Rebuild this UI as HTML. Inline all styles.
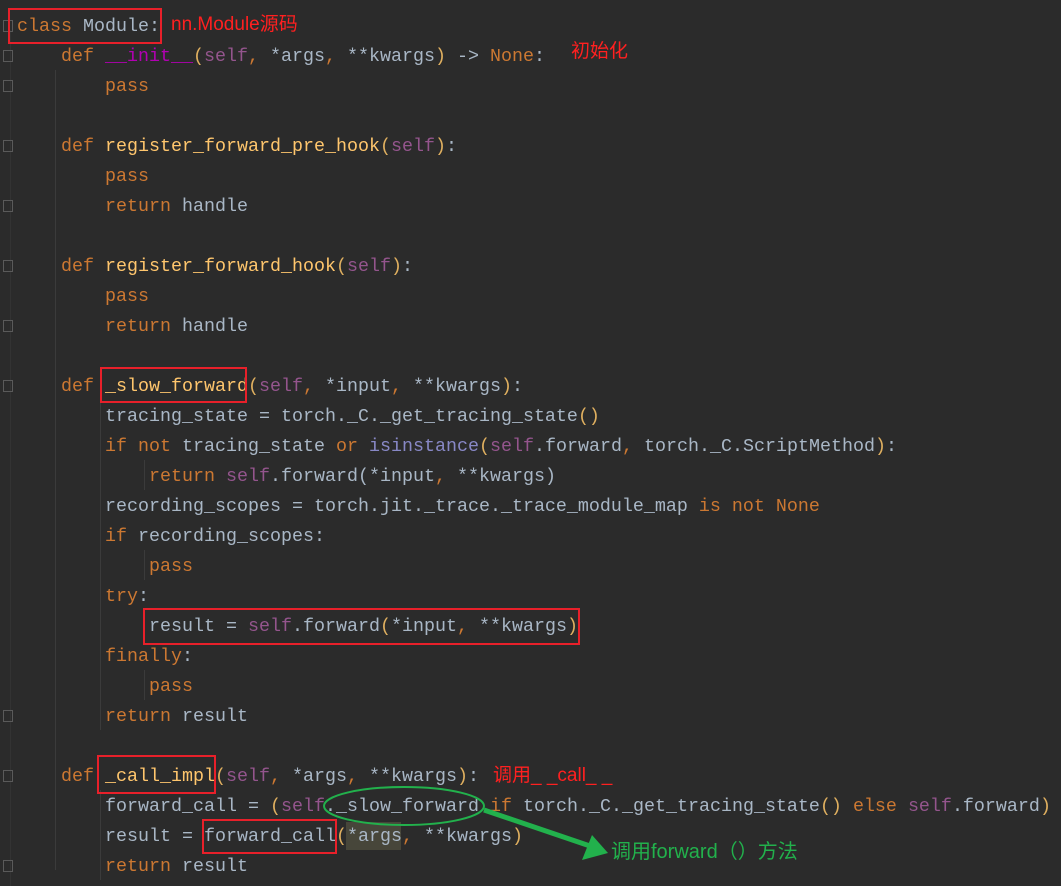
<!DOCTYPE html>
<html><head><meta charset="utf-8"><style>
body{margin:0;width:1061px;height:886px;background:#2b2b2b;overflow:hidden;position:relative;font-family:"Liberation Mono",monospace;}
.l{position:absolute;left:17px;font-size:18.33px;line-height:30px;height:30px;white-space:pre;color:#a9b7c6;margin-top:2px}
.k{color:#cc7832}.f{color:#ffc66d}.s{color:#94558d}.m{color:#b200b2}.p{color:#e0b060}.b{color:#8888c6}
.box{position:absolute;border:2px solid #e8202a;box-sizing:border-box}
.r{position:absolute;color:#ff2020;font-family:"Liberation Sans","Noto Sans CJK SC",sans-serif;font-size:19px;line-height:24px;white-space:pre}
.g{color:#22b14c;font-size:20px}
.vg{position:absolute;width:1px;background:#3b3b3b}
.fold{position:absolute;left:3px;width:10px;height:12px;border:1px solid #5a5a5a;box-sizing:border-box}
</style></head><body>
<div class="vg" style="left:10px;top:30px;height:856px;background:#333"></div>
<div class="vg" style="left:55px;top:70px;height:800px"></div>
<div class="vg" style="left:100px;top:400px;height:330px"></div>
<div class="vg" style="left:100px;top:790px;height:90px"></div>
<div class="vg" style="left:144px;top:460px;height:30px"></div>
<div class="vg" style="left:144px;top:550px;height:30px"></div>
<div class="vg" style="left:144px;top:610px;height:30px"></div>
<div class="vg" style="left:144px;top:670px;height:30px"></div>
<div class="fold" style="top:20px"></div><div class="fold" style="top:50px"></div><div class="fold" style="top:80px"></div>
<div class="fold" style="top:140px"></div><div class="fold" style="top:200px"></div>
<div class="fold" style="top:260px"></div><div class="fold" style="top:320px"></div>
<div class="fold" style="top:380px"></div><div class="fold" style="top:710px"></div>
<div class="fold" style="top:770px"></div><div class="fold" style="top:860px"></div>
<div style="position:absolute;left:346px;top:822px;width:55px;height:28px;background:#47463a"></div>

<div class="l" style="top:10px"><span class="k">class</span> Module:</div>
<div class="l" style="top:40px">    <span class="k">def</span> <span class="m">__init__</span><span class="p">(</span><span class="s">self</span><span class="k">,</span> *args<span class="k">,</span> **kwargs<span class="p">)</span> -&gt; <span class="k">None</span>:</div>
<div class="l" style="top:70px">        <span class="k">pass</span></div>
<div class="l" style="top:130px">    <span class="k">def</span> <span class="f">register_forward_pre_hook</span><span class="p">(</span><span class="s">self</span><span class="p">)</span>:</div>
<div class="l" style="top:160px">        <span class="k">pass</span></div>
<div class="l" style="top:190px">        <span class="k">return</span> handle</div>
<div class="l" style="top:250px">    <span class="k">def</span> <span class="f">register_forward_hook</span><span class="p">(</span><span class="s">self</span><span class="p">)</span>:</div>
<div class="l" style="top:280px">        <span class="k">pass</span></div>
<div class="l" style="top:310px">        <span class="k">return</span> handle</div>
<div class="l" style="top:370px">    <span class="k">def</span> <span class="f">_slow_forward</span><span class="p">(</span><span class="s">self</span><span class="k">,</span> *input<span class="k">,</span> **kwargs<span class="p">)</span>:</div>
<div class="l" style="top:400px">        tracing_state = torch._C._get_tracing_state<span class="p">()</span></div>
<div class="l" style="top:430px">        <span class="k">if not</span> tracing_state <span class="k">or</span> <span class="b">isinstance</span><span class="p">(</span><span class="s">self</span>.forward<span class="k">,</span> torch._C.ScriptMethod<span class="p">)</span>:</div>
<div class="l" style="top:460px">            <span class="k">return</span> <span class="s">self</span>.forward(*input<span class="k">,</span> **kwargs)</div>
<div class="l" style="top:490px">        recording_scopes = torch.jit._trace._trace_module_map <span class="k">is not None</span></div>
<div class="l" style="top:520px">        <span class="k">if</span> recording_scopes:</div>
<div class="l" style="top:550px">            <span class="k">pass</span></div>
<div class="l" style="top:580px">        <span class="k">try</span>:</div>
<div class="l" style="top:610px">            result = <span class="s">self</span>.forward<span class="p">(</span>*input<span class="k">,</span> **kwargs<span class="p">)</span></div>
<div class="l" style="top:640px">        <span class="k">finally</span>:</div>
<div class="l" style="top:670px">            <span class="k">pass</span></div>
<div class="l" style="top:700px">        <span class="k">return</span> result</div>
<div class="l" style="top:760px">    <span class="k">def</span> <span class="f">_call_impl</span><span class="p">(</span><span class="s">self</span><span class="k">,</span> *args<span class="k">,</span> **kwargs<span class="p">)</span>:</div>
<div class="l" style="top:790px">        forward_call = <span class="p">(</span><span class="s">self</span>._slow_forward <span class="k">if</span> torch._C._get_tracing_state<span class="p">()</span> <span class="k">else</span> <span class="s">self</span>.forward<span class="p">)</span></div>
<div class="l" style="top:820px">        result = forward_call<span class="p">(</span>*args<span class="k">,</span> **kwargs<span class="p">)</span></div>
<div class="l" style="top:850px">        <span class="k">return</span> result</div>

<div class="box" style="left:8px;top:8px;width:154px;height:36px"></div>
<div class="box" style="left:100px;top:367px;width:147px;height:36px"></div>
<div class="box" style="left:143px;top:608px;width:437px;height:37px"></div>
<div class="box" style="left:97px;top:755px;width:119px;height:39px"></div>
<div class="box" style="left:202px;top:819px;width:135px;height:35px"></div>
<div class="r" style="left:171px;top:13px">nn.Module源码</div>
<div class="r" style="left:571px;top:40px">初始化</div>
<div class="r" style="left:493px;top:764px">调用_ _call_ _</div>
<div class="r g" style="left:611px;top:840px">调用forward（）方法</div>
<svg style="position:absolute;left:0;top:0" width="1061" height="886">
<ellipse cx="404" cy="806" rx="80" ry="19" fill="none" stroke="#22b14c" stroke-width="2"/>
<line x1="484" y1="810" x2="590" y2="846" stroke="#22b14c" stroke-width="5"/>
<polygon points="608,853 582,860 592,835" fill="#22b14c"/>
</svg>
</body></html>
